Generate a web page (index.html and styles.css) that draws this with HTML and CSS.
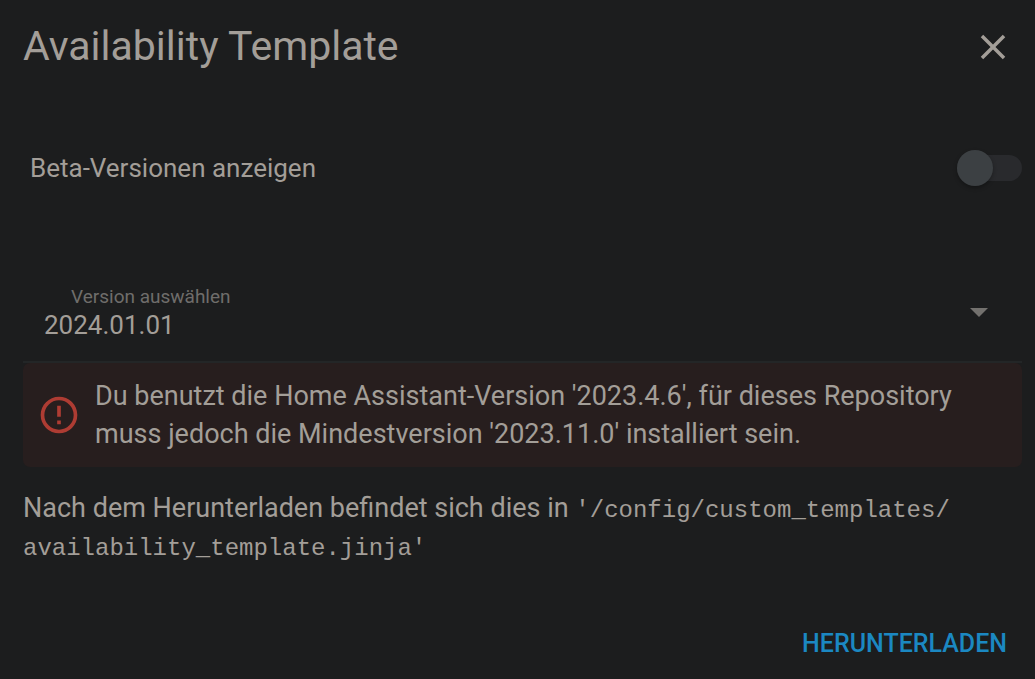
FILE: index.html
```html
<!DOCTYPE html>
<html lang="de">
<head>
    <meta charset="UTF-8">
    <meta name="viewport" content="width=device-width, initial-scale=1.0">
    <title>Availability Template</title>
    <link rel="stylesheet" href="styles.css">
</head>
<body>
    <main class="dialog">
        <header class="dialog-header">
            <h1>Availability Template</h1>
            <button type="button" class="close-btn" aria-label="Schließen">
                <svg viewBox="0 0 24 24"><path d="M19,6.41L17.59,5L12,10.59L6.41,5L5,6.41L10.59,12L5,17.59L6.41,19L12,13.41L17.59,19L19,17.59L13.41,12L19,6.41Z"/></svg>
            </button>
        </header>

        <div class="beta-row">
            <label for="beta">Beta-Versionen anzeigen</label>
            <input type="checkbox" id="beta" class="switch" role="switch">
        </div>

        <div class="version-field">
            <label for="version">Version auswählen</label>
            <select id="version">
                <option selected>2024.01.01</option>
            </select>
            <svg class="arrow" viewBox="0 0 18 9"><path d="M0,0H18L9,9Z"/></svg>
        </div>

        <div class="alert" role="alert">
            <svg class="alert-icon" viewBox="0 0 24 24"><path d="M11,15H13V17H11V15M11,7H13V13H11V7M12,2C6.47,2 2,6.5 2,12A10,10 0 0,0 12,22A10,10 0 0,0 22,12A10,10 0 0,0 12,2M12,20A8,8 0 0,1 4,12A8,8 0 0,1 12,4A8,8 0 0,1 20,12A8,8 0 0,1 12,20Z"/></svg>
            <p>Du benutzt die Home Assistant-Version '2023.4.6', für dieses Repository muss jedoch die Mindestversion '2023.11.0' installiert sein.</p>
        </div>

        <p class="note">Nach dem Herunterladen befindet sich dies in <code>'/config/custom_templates/<wbr>availability_template.jinja'</code></p>

        <footer class="dialog-actions">
            <button type="button" class="download-btn">Herunterladen</button>
        </footer>
    </main>
</body>
</html>
```
FILE: styles.css
```css
* {
    box-sizing: border-box;
}
body {
    margin: 0;
    background-color: #1c1d1e;
    color: #a39e98;
    font-family: Roboto, sans-serif;
    font-size: 26px;
    line-height: 38px;
}
h1, p {
    margin: 0;
}
button {
    padding: 0;
    border: none;
    background: none;
    font-family: inherit;
    cursor: pointer;
}
svg {
    display: block;
    fill: currentColor;
}
.dialog {
    padding: 20px 13px 12px 23px;
}
.dialog-header {
    display: flex;
    justify-content: space-between;
    align-items: center;
    padding-right: 8px;
}
.dialog-header h1 {
    font-size: 41px;
    font-weight: 400;
    line-height: 53px;
}
.close-btn {
    color: #a39e98;
}
.close-btn svg {
    width: 42px;
    height: 42px;
}
.beta-row {
    display: flex;
    justify-content: space-between;
    align-items: center;
    margin-top: 76px;
    padding-left: 7px;
}
.switch {
    appearance: none;
    display: flex;
    align-items: center;
    width: 65px;
    height: 26px;
    margin: 0;
    border-radius: 13px;
    background-color: #292a2d;
    cursor: pointer;
}
.switch::before {
    content: "";
    width: 36px;
    height: 36px;
    border-radius: 50%;
    background-color: #3c4043;
    box-shadow: 0 2px 4px rgba(0, 0, 0, 0.3);
}
.switch:checked {
    justify-content: flex-end;
}
.version-field {
    position: relative;
    display: flex;
    flex-direction: column;
    margin-top: 98px;
    border-bottom: 2px solid #232627;
}
.version-field label {
    padding-left: 48px;
    color: #6f6d6b;
    font-size: 19px;
    line-height: 24px;
}
.version-field select {
    appearance: none;
    width: 100%;
    padding: 0 60px 19px 21px;
    border: none;
    background: none;
    color: inherit;
    font: inherit;
    line-height: 33px;
}
.arrow {
    position: absolute;
    top: 23px;
    right: 34px;
    width: 18px;
    height: 9px;
    color: #73716e;
    pointer-events: none;
}
.alert {
    display: flex;
    align-items: center;
    gap: 14px;
    padding: 14px;
    border-radius: 7px;
    background-color: #271e1e;
    font-size: 27px;
}
.alert-icon {
    flex: none;
    width: 44px;
    height: 44px;
    color: #ae3c33;
}
.note {
    margin-top: 22px;
    font-size: 27px;
}
.note code {
    font-family: "Liberation Mono", monospace;
    font-size: 24px;
    line-height: 24px;
}
.dialog-actions {
    display: flex;
    justify-content: flex-end;
    margin-top: 60px;
    padding-right: 15px;
}
.download-btn {
    color: #1b88c2;
    font-size: 25px;
    font-weight: 500;
    line-height: 38px;
    text-transform: uppercase;
}
```
